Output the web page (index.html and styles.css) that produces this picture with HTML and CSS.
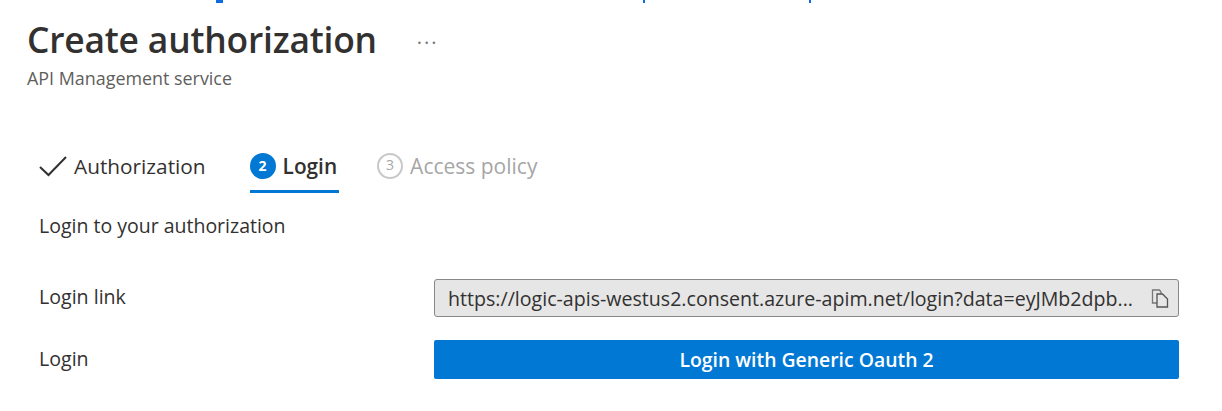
FILE: index.html
```html
<!DOCTYPE html>
<html lang="en">
<head>
    <meta charset="UTF-8">
    <meta name="viewport" content="width=device-width, initial-scale=1.0">
    <title>Create authorization</title>
    <link rel="stylesheet" href="styles.css">
</head>
<body>

    <div class="top-strip">
        <span class="sliver sliver-wide"></span>
        <span class="sliver sliver-a"></span>
        <span class="sliver sliver-b"></span>
    </div>

    <header class="page-head">
        <div class="title-row">
            <h1>Create authorization</h1>
            <span class="more">&middot;&middot;&middot;</span>
        </div>
        <div class="subtitle">API Management service</div>
    </header>

    <div class="content">
        <nav class="tabs">
            <div class="tab tab-done">
                <svg class="check" width="28" height="22" viewBox="0 0 28 22">
                    <path d="M1 12 L9.5 20 L27 2" fill="none" stroke="#323130" stroke-width="2"/>
                </svg>
                <span>Authorization</span>
            </div>
            <div class="tab tab-active">
                <span class="step step-on">2</span>
                <span>Login</span>
            </div>
            <div class="tab tab-off">
                <span class="step step-off">3</span>
                <span>Access policy</span>
            </div>
        </nav>

        <p class="intro">Login to your authorization</p>

        <div class="form-row row-link">
            <label>Login link</label>
            <div class="link-box">
                <span class="link-text">https://logic-apis-westus2.consent.azure-apim.net/login?data=eyJMb2dpb...</span>
                <svg class="copy" width="18" height="19" viewBox="0 0 18 19">
                    <path d="M1.5 1 H8.5 L10 3 V14 H1.5 Z" fill="#e6e6e6" stroke="#777" stroke-width="1.3"/>
                    <path d="M6 5 H11.5 L16.5 10 V18 H6 Z" fill="#e6e6e6" stroke="#555" stroke-width="1.3"/>
                </svg>
            </div>
        </div>

        <div class="form-row row-login">
            <label>Login</label>
            <button class="login-btn">Login with Generic Oauth 2</button>
        </div>
    </div>

</body>
</html>
```

FILE: styles.css
```css
body {
    font-family: "Open Sans", "Noto Sans", sans-serif;
    margin: 0;
    background-color: white;
    color: #323130;
    height: 411px;
    overflow: hidden;
}
.top-strip {
    display: flex;
    height: 3px;
    padding-left: 216px;
}
.sliver {
    display: block;
    height: 3px;
    background-color: #0f6cde;
}
.sliver-wide {
    width: 7px;
}
.sliver-a {
    width: 2px;
    margin-left: 420px;
}
.sliver-b {
    width: 2px;
    margin-left: 164px;
}
.page-head {
    padding: 14px 0 0 27px;
}
.title-row {
    display: flex;
    align-items: center;
    height: 44px;
}
h1 {
    font-size: 35.4px;
    font-weight: 600;
    margin: 0;
    line-height: 44px;
    letter-spacing: -0.2px;
}
.more {
    margin-left: 40px;
    padding-top: 6px;
    font-size: 20px;
    letter-spacing: 2px;
    color: #777;
}
.subtitle {
    font-size: 17.9px;
    line-height: 24px;
    color: #605e5c;
    margin-top: 5px;
}
.content {
    padding: 0 43px 0 39px;
}
.tabs {
    display: flex;
    margin-top: 55px;
    height: 49px;
}
.tab {
    display: flex;
    align-items: center;
    gap: 7px;
    height: 41px;
    font-size: 20.8px;
}
.tab-done {
    margin-right: 44px;
}
.tab-active {
    font-weight: 600;
    margin-right: 38px;
    border-bottom: 3px solid #0078d4;
    padding: 0 2px 4px 0;
}
.tab-off {
    color: #a6a6a6;
    font-size: 21px;
}
.step {
    width: 26px;
    height: 26px;
    border-radius: 50%;
    box-sizing: border-box;
    display: flex;
    align-items: center;
    justify-content: center;
    font-size: 14px;
}
.step-on {
    background-color: #0078d4;
    color: white;
    font-weight: 700;
}
.step-off {
    border: 2px solid #c8c8c8;
    color: #a6a6a6;
    padding-bottom: 3px;
}
.intro {
    font-size: 19.5px;
    line-height: 26px;
    margin: 19px 0 0;
}
.form-row {
    display: flex;
    align-items: center;
}
.form-row label {
    width: 395px;
    font-size: 19.6px;
    padding-bottom: 3px;
}
.row-link {
    margin-top: 40px;
}
.row-login {
    margin-top: 23px;
}
.link-box {
    flex: 1;
    height: 38px;
    box-sizing: border-box;
    display: flex;
    align-items: center;
    justify-content: space-between;
    padding: 0 9px 0 13px;
    background-color: #e6e6e6;
    border: 1px solid #8a8886;
    border-radius: 3px;
}
.link-text {
    font-size: 19.6px;
    white-space: nowrap;
}
.login-btn {
    flex: 1;
    height: 39px;
    border: none;
    border-radius: 2px;
    background-color: #0078d4;
    color: white;
    font-family: inherit;
    font-size: 19.4px;
    font-weight: 600;
}
```
